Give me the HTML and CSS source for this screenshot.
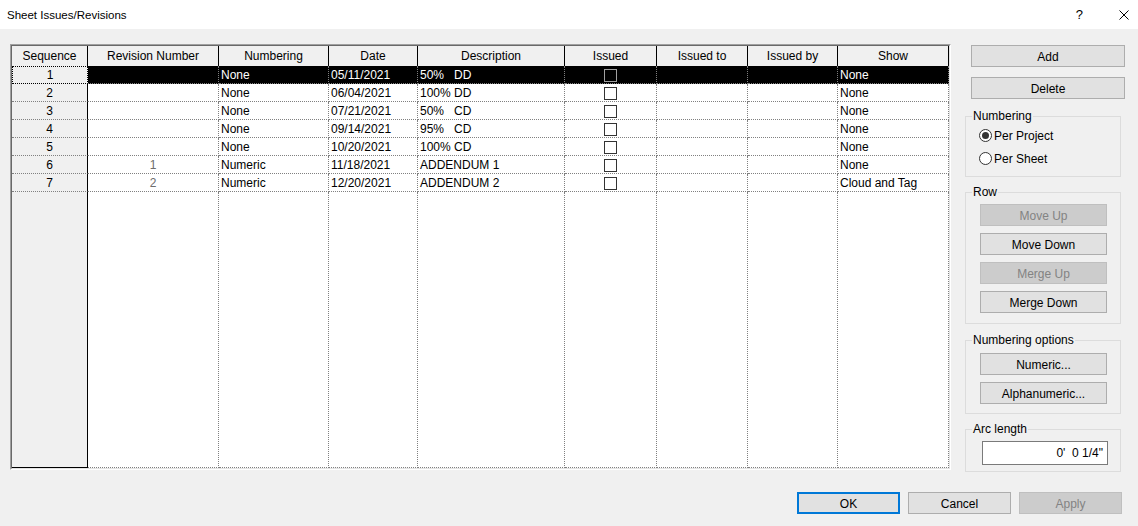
FILE: index.html
```html
<!DOCTYPE html>
<html>
<head>
<meta charset="utf-8">
<title>Sheet Issues/Revisions</title>
<link rel="stylesheet" href="styles.css">
</head>
<body>
<div class="titlebar">
  <span class="title">Sheet Issues/Revisions</span>
  <span class="help">?</span>
  <svg class="close" viewBox="0 0 10 10"><path d="M0.5 0.5 L9.5 9.5 M9.5 0.5 L0.5 9.5" stroke="#000" stroke-width="1" fill="none"/></svg>
</div>
<div class="main">
  <div class="frame"><div class="frame-inner"><div class="grid">
    <div class="h">Sequence</div><div class="h">Revision Number</div><div class="h">Numbering</div><div class="h">Date</div><div class="h">Description</div><div class="h">Issued</div><div class="h">Issued to</div><div class="h">Issued by</div><div class="h">Show</div>

    <div class="s focus">1</div><div class="c sel"></div><div class="c sel">None</div><div class="c sel">05/11/2021</div><div class="c sel"><span class="pct">50%</span>DD</div><div class="c sel chk"><span class="box"></span></div><div class="c sel"></div><div class="c sel"></div><div class="c sel">None</div>

    <div class="s">2</div><div class="c"></div><div class="c">None</div><div class="c">06/04/2021</div><div class="c"><span class="pct">100%</span>DD</div><div class="c chk"><span class="box"></span></div><div class="c"></div><div class="c"></div><div class="c">None</div>

    <div class="s">3</div><div class="c"></div><div class="c">None</div><div class="c">07/21/2021</div><div class="c"><span class="pct">50%</span>CD</div><div class="c chk"><span class="box"></span></div><div class="c"></div><div class="c"></div><div class="c">None</div>

    <div class="s">4</div><div class="c"></div><div class="c">None</div><div class="c">09/14/2021</div><div class="c"><span class="pct">95%</span>CD</div><div class="c chk"><span class="box"></span></div><div class="c"></div><div class="c"></div><div class="c">None</div>

    <div class="s">5</div><div class="c"></div><div class="c">None</div><div class="c">10/20/2021</div><div class="c"><span class="pct">100%</span>CD</div><div class="c chk"><span class="box"></span></div><div class="c"></div><div class="c"></div><div class="c">None</div>

    <div class="s">6</div><div class="c ctr rv">1</div><div class="c">Numeric</div><div class="c">11/18/2021</div><div class="c">ADDENDUM 1</div><div class="c chk"><span class="box"></span></div><div class="c"></div><div class="c"></div><div class="c">None</div>

    <div class="s">7</div><div class="c ctr rv">2</div><div class="c">Numeric</div><div class="c">12/20/2021</div><div class="c">ADDENDUM 2</div><div class="c chk"><span class="box"></span></div><div class="c"></div><div class="c"></div><div class="c">Cloud and Tag</div>

    <div class="fill-s"></div><div class="fill-c"></div><div class="fill-c"></div><div class="fill-c"></div><div class="fill-c"></div><div class="fill-c"></div><div class="fill-c"></div><div class="fill-c"></div><div class="fill-c"></div>
  </div></div></div>

  <div class="panel">
    <button class="btn add">Add</button>
    <button class="btn del">Delete</button>

    <fieldset class="group g-num">
      <legend>Numbering</legend>
      <div class="radio"><span class="rb on"></span><span>Per Project</span></div>
      <div class="radio"><span class="rb"></span><span>Per Sheet</span></div>
    </fieldset>

    <fieldset class="group g-row">
      <legend>Row</legend>
      <div class="stack">
        <button class="btn" disabled>Move Up</button>
        <button class="btn">Move Down</button>
        <button class="btn" disabled>Merge Up</button>
        <button class="btn">Merge Down</button>
      </div>
    </fieldset>

    <fieldset class="group g-opt">
      <legend>Numbering options</legend>
      <div class="stack opt">
        <button class="btn">Numeric...</button>
        <button class="btn">Alphanumeric...</button>
      </div>
    </fieldset>

    <fieldset class="group g-arc">
      <legend>Arc length</legend>
      <div class="input">0'  0 1/4"</div>
    </fieldset>
  </div>
</div>
<div class="footer">
  <button class="btn ok">OK</button>
  <button class="btn">Cancel</button>
  <button class="btn" disabled>Apply</button>
</div>
</body>
</html>
```
FILE: styles.css
```css
* { box-sizing: border-box; }
html, body { margin: 0; padding: 0; }
body {
  width: 1138px;
  height: 526px;
  overflow: hidden;
  background: #f0f0f0;
  font-family: "Liberation Sans", Arial, sans-serif;
  font-size: 12px;
  color: #000;
}

.titlebar {
  height: 29px;
  background: #fff;
  display: flex;
  align-items: center;
  padding-left: 7px;
}
.title { font-size: 11.5px; }
.help { margin-left: auto; font-size: 13px; margin-right: 36px; }
.close { width: 10px; height: 10px; margin-right: 9px; display: block; }

.main {
  display: flex;
  align-items: flex-start;
  gap: 14px;
  padding: 15px 13px 0 10px;
}

.frame {
  border: 1px solid;
  border-color: #a0a0a0 #fff #fff #a0a0a0;
}
.frame-inner {
  border: 1px solid;
  border-color: #696969 #e3e3e3 #e3e3e3 #696969;
}
.grid {
  display: grid;
  grid-template-columns: 76px 131px 110px 89px 147px 92px 91px 90px 111px;
  grid-template-rows: 20px repeat(7, 18px) 276px;
  width: 937px;
  height: 422px;
  background: #fff;
}
.h {
  background: #f0f0f0;
  border-right: 1px solid #000;
  text-align: center;
  line-height: 21px;
  white-space: nowrap;
}
.s {
  background: #f0f0f0;
  border-right: 1px solid #000;
  border-bottom: 1px dotted #808080;
  text-align: center;
  line-height: 19px;
}
.s.focus {
  border: 1px dotted #000;
  line-height: 17px;
}
.c {
  border-right: 1px dotted #808080;
  border-bottom: 1px dotted #808080;
  padding-left: 2px;
  line-height: 19px;
  white-space: nowrap;
}
.sel { background: #000; color: #fff; }
.ctr { text-align: center; padding-left: 0; }
.rv { color: #6d6d6d; }
.chk {
  display: flex;
  align-items: center;
  justify-content: center;
  padding-left: 0;
  padding-top: 1px;
}
.box {
  width: 13px;
  height: 13px;
  border: 1px solid #333;
  background: #fff;
}
.sel .box { background: #000; border-color: #a0a0a0; }
.pct { display: inline-block; width: 34px; }
.fill-s {
  background: #f0f0f0;
  border-right: 1px solid #000;
  border-bottom: 1px solid #000;
}
.fill-c {
  border-right: 1px dotted #808080;
  border-bottom: 1px dotted #808080;
}

.panel {
  width: 160px;
  display: flex;
  flex-direction: column;
}
.btn {
  height: 22px;
  padding: 1px 0 0;
  margin: 0;
  background: #e1e1e1;
  border: 1px solid #adadad;
  border-radius: 0;
  font: inherit;
  color: #000;
  display: flex;
  align-items: center;
  justify-content: center;
}
.btn:disabled {
  background: #cccccc;
  border-color: #bfbfbf;
  color: #838383;
}
.add { margin: 1px 0 0 6px; width: 154px; }
.del { margin: 10px 0 0 6px; width: 154px; }

.group {
  margin: 0;
  padding: 0;
  border: 1px solid #dcdcdc;
  width: 156px;
  min-width: 0;
}
.group legend {
  padding: 0 1px;
  margin-left: 6px;
  line-height: 16px;
}
.g-num { margin-top: 9px; padding-bottom: 6px; }
.radio {
  display: flex;
  align-items: center;
  height: 23px;
  padding-left: 13px;
  gap: 2px;
}
.rb {
  width: 13px;
  height: 13px;
  border: 1px solid #333;
  border-radius: 50%;
  background: #fff;
  display: flex;
  align-items: center;
  justify-content: center;
}
.rb.on::after {
  content: "";
  width: 7px;
  height: 7px;
  border-radius: 50%;
  background: #333;
}
.g-row { margin-top: 7px; padding-bottom: 10px; }
.stack {
  display: flex;
  flex-direction: column;
  gap: 7px;
  margin-top: 4px;
  padding-left: 14px;
}
.stack .btn { width: 127px; }
.g-opt { margin-top: 8px; padding-bottom: 9px; }
.stack.opt { margin-top: 5px; }
.g-arc { margin-top: 7px; padding-bottom: 6px; }
.input {
  margin: 4px 0 0 16px;
  width: 126px;
  height: 24px;
  border: 1px solid #7a7a7a;
  background: #fff;
  text-align: right;
  padding-right: 4px;
  line-height: 22px;
  white-space: pre;
}

.footer {
  display: flex;
  justify-content: flex-end;
  gap: 8px;
  padding: 20px 16px 0 0;
}
.footer .btn { width: 103px; }
.ok { border: 2px solid #0078d7; }
```
